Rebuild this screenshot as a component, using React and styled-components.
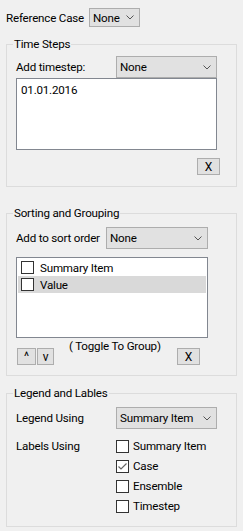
import React from 'react';
import styled, { createGlobalStyle } from 'styled-components';

const GlobalStyle = createGlobalStyle`
    html, body {
        margin: 0;
        padding: 0;
        background: #f0f0f0;
    }
    body {
        font-family: Roboto, "Segoe UI", "Liberation Sans", sans-serif;
        font-size: 11.6px;
        letter-spacing: -0.2px;
        color: #000;
        white-space: nowrap;
    }
`;

function Chevron() {
    return (
        <svg width="8" height="5" viewBox="0 0 8 5">
            <path d="M0.5 0.5 L4 4 L7.5 0.5" fill="none" stroke="#555" strokeWidth="1" />
        </svg>
    );
}

function Combo({ value, width }) {
    return (
        <ComboBox $width={width}>
            <span>{value}</span>
            <Chevron />
        </ComboBox>
    );
}

function Check({ checked, label }) {
    return (
        <CheckRow>
            <CheckSquare>
                {checked &&
                    <svg width="11" height="11" viewBox="0 0 11 11">
                        <path d="M1.5 5.5 L4 8 L9.5 2.5" fill="none" stroke="#666" strokeWidth="1.2" />
                    </svg>
                }
            </CheckSquare>
            <span>{label}</span>
        </CheckRow>
    );
}

function App() {
    const sortItems = [
        { name: 'Summary Item', selected: false },
        { name: 'Value', selected: true },
    ];
    const labelOptions = [
        { name: 'Summary Item', checked: false },
        { name: 'Case', checked: true },
        { name: 'Ensemble', checked: false },
        { name: 'Timestep', checked: false },
    ];

    return (
        <Page>
            <GlobalStyle />
            <TopRow>
                <TopLabel>Reference Case</TopLabel>
                <Combo value="None" width={51} />
            </TopRow>

            <GroupBox $top={9} $bottom={11}>
                <GroupTitle>Time Steps</GroupTitle>
                <FieldRow $top={4}>
                    <FieldLabel>Add timestep:</FieldLabel>
                    <Combo value="None" width={101} />
                </FieldRow>
                <ListBox $width={201} $height={72}>
                    <ListText>01.01.2016</ListText>
                </ListBox>
                <ButtonRow>
                    <SmallButton $width={23}>X</SmallButton>
                </ButtonRow>
            </GroupBox>

            <GroupBox $top={18} $bottom={10}>
                <GroupTitle>Sorting and Grouping</GroupTitle>
                <FieldRow $top={6}>
                    <FieldLabel $width={90}>Add to sort order</FieldLabel>
                    <Combo value="None" width={102} />
                </FieldRow>
                <ListBox $width={192} $height={81} $top={8}>
                    {sortItems.map((item) => (
                        <SortItem key={item.name} $selected={item.selected}>
                            <CheckSquare />
                            <span>{item.name}</span>
                        </SortItem>
                    ))}
                </ListBox>
                <SortFooter>
                    <MoveButtons>
                        <SmallButton $width={19}>^</SmallButton>
                        <SmallButton $width={17}>v</SmallButton>
                    </MoveButtons>
                    <Hint>( Toggle To Group)</Hint>
                    <RemoveButton $width={23}>X</RemoveButton>
                </SortFooter>
            </GroupBox>

            <GroupBox $top={9} $bottom={10}>
                <GroupTitle>Legend and Lables</GroupTitle>
                <FieldRow $top={6}>
                    <FieldLabel>Legend Using</FieldLabel>
                    <Combo value="Summary Item" width={101} />
                </FieldRow>
                <LabelsGrid>
                    <FieldLabel $height={20}>Labels Using</FieldLabel>
                    <CheckColumn>
                        {labelOptions.map((opt) => (
                            <Check key={opt.name} checked={opt.checked} label={opt.name} />
                        ))}
                    </CheckColumn>
                </LabelsGrid>
            </GroupBox>
        </Page>
    );
}

const Page = styled.div`
    width: 243px;
    height: 531px;
    box-sizing: border-box;
    padding-top: 8px;
    overflow: hidden;
`;

const TopRow = styled.div`
    display: flex;
    align-items: center;
    height: 19px;
    padding-left: 6px;
`;

const TopLabel = styled.span`
    width: 83px;
`;

const ComboBox = styled.div`
    box-sizing: border-box;
    width: ${(p) => p.$width}px;
    height: 100%;
    display: flex;
    align-items: center;
    justify-content: space-between;
    padding: 0 5px 0 3px;
    background: #e1e1e1;
    border: 1px solid #adadad;
    line-height: 14px;
`;

const GroupBox = styled.fieldset`
    margin: ${(p) => p.$top}px 6px 0 6px;
    padding: 0 16px ${(p) => p.$bottom}px 9px;
    border: 1px solid #dcdcdc;
    min-width: 0;
`;

const GroupTitle = styled.legend`
    padding: 0 1px;
    margin-left: -3px;
    line-height: 16px;
`;

const FieldRow = styled.div`
    display: flex;
    align-items: center;
    height: 22px;
    margin-top: ${(p) => p.$top}px;
`;

const FieldLabel = styled.div`
    width: ${(p) => p.$width || 100}px;
    flex: none;
    display: flex;
    align-items: center;
    height: ${(p) => (p.$height ? `${p.$height}px` : 'auto')};
`;

const ListBox = styled.div`
    box-sizing: border-box;
    width: ${(p) => p.$width}px;
    height: ${(p) => p.$height}px;
    margin-top: ${(p) => p.$top || 0}px;
    background: #fff;
    border: 1px solid #828790;
    padding: 1px;
`;

const ListText = styled.div`
    padding: 2px 0 0 3px;
    line-height: 16px;
`;

const SortItem = styled.div`
    display: flex;
    align-items: center;
    gap: 6px;
    height: 17px;
    padding-left: 3px;
    background: ${(p) => (p.$selected ? '#d9d9d9' : 'transparent')};
`;

const CheckSquare = styled.span`
    box-sizing: border-box;
    flex: none;
    width: 13px;
    height: 13px;
    border: 1px solid #333;
    background: #fff;
    display: flex;
    align-items: center;
    justify-content: center;
`;

const ButtonRow = styled.div`
    display: flex;
    justify-content: flex-end;
    margin-top: 8px;
`;

const SmallButton = styled.button`
    box-sizing: border-box;
    width: ${(p) => p.$width}px;
    height: 17px;
    padding: 0;
    margin: 0;
    background: #e1e1e1;
    border: 1px solid #adadad;
    font-family: inherit;
    font-size: 12px;
    letter-spacing: inherit;
    line-height: 14px;
    color: #000;
`;

const RemoveButton = styled(SmallButton)`
    margin: 10px 20px 0 auto;
`;

const SortFooter = styled.div`
    display: flex;
    align-items: flex-start;
`;

const MoveButtons = styled.div`
    display: flex;
    gap: 1px;
    margin: 10px 0 0 1px;
`;

const Hint = styled.div`
    margin-left: 15px;
    line-height: 16px;
`;

const LabelsGrid = styled.div`
    display: flex;
    align-items: flex-start;
    margin-top: 7px;
`;

const CheckColumn = styled.div`
    display: flex;
    flex-direction: column;
`;

const CheckRow = styled.div`
    display: flex;
    align-items: center;
    gap: 4px;
    height: 20px;
`;

export default App;
